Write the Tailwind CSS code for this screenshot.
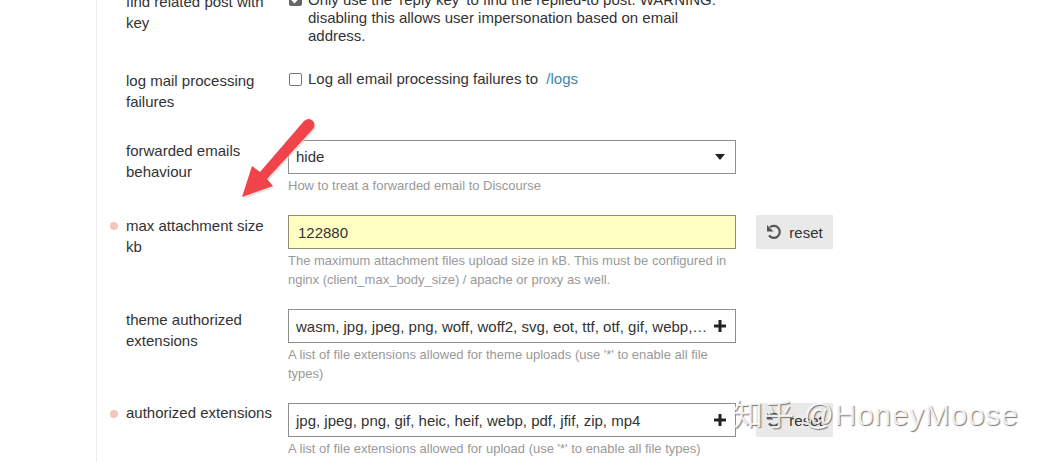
<!DOCTYPE html>
<html>
<head>
<meta charset="utf-8">
<script src="https://cdn.jsdelivr.net/npm/@tailwindcss/browser@4"></script>
</head>
<body class="bg-white overflow-hidden">
<div class="relative h-[462px] w-[1045px] overflow-hidden font-['Liberation_Sans',Arial,sans-serif] text-[#333]">
  <div class="ml-[96px] border-l border-[#ececec] h-[480px] -mt-[9px] pl-[29px] text-[15px] leading-[21px]">
    <div class="flex mb-[25px]">
      <div class="w-[162px] pr-[20px] shrink-0">find related post with key</div>
      <div class="w-[448px] flex gap-[6px] leading-[18px]">
        <span class="ml-[1px] mt-[2px] w-[13px] h-[13px] rounded-[2px] bg-[#666] shrink-0 flex items-center justify-center">
          <svg width="11" height="11" viewBox="0 0 11 11"><path d="M2 5.5 L4.5 8 L9 3" stroke="#fff" stroke-width="2" fill="none"/></svg>
        </span>
        <span class="max-w-[415px]">Only use the 'reply key' to find the replied-to post. WARNING: disabling this allows user impersonation based on email address.</span>
      </div>
    </div>
    <div class="flex mb-[28px]">
      <div class="w-[162px] pr-[20px] shrink-0">log mail processing failures</div>
      <div class="w-[448px] flex gap-[6px] leading-[18px]">
        <span class="ml-[1px] mt-[3px] w-[13px] h-[13px] rounded-[2px] border border-[#767676] bg-white shrink-0"></span>
        <span>Log all email processing failures to <a class="text-[#3d87a8] ml-[4px]">/logs</a></span>
      </div>
    </div>
    <div class="flex mb-[20px]">
      <div class="w-[162px] pr-[20px] shrink-0">forwarded emails behaviour</div>
      <div class="w-[448px]">
        <div class="h-[34px] border border-[#8f8f8f] flex items-center justify-between pl-[7px] pr-[10px]">
          <span class="-mt-[1px]">hide</span>
          <svg width="10" height="6" viewBox="0 0 10 6"><path d="M0 0 H10 L5 6 Z" fill="#222"/></svg>
        </div>
        <div class="mt-[2px] text-[13px] leading-[19px] text-[#999]">How to treat a forwarded email to Discourse</div>
      </div>
    </div>
    <div class="relative flex mb-[20px]">
      <span class="absolute -left-[16px] top-[7px] w-[8px] h-[8px] rounded-full bg-[#f2c6bc]"></span>
      <div class="w-[162px] pr-[20px] shrink-0">max attachment size kb</div>
      <div class="w-[448px]">
        <div class="h-[34px] border border-[#8f8f6f] bg-[#ffffc4] flex items-center pl-[9px]">122880</div>
        <div class="mt-[2px] text-[13px] leading-[19px] text-[#999]">The maximum attachment files upload size in kB. This must be configured in nginx (client_max_body_size) / apache or proxy as well.</div>
      </div>
      <div class="ml-[20px] w-[77px] h-[34px] bg-[#e9e9e9] flex items-center justify-center gap-[7px]">
        <svg width="16" height="16" viewBox="0 0 16 16"><path d="M4 3.2 A6 6 0 1 1 3 11.5" stroke="#555" stroke-width="2.2" fill="none"/><path d="M1 1 V7.5 H7.5 Z" fill="#555"/></svg>
        <span>reset</span>
      </div>
    </div>
    <div class="flex mb-[20px]">
      <div class="w-[162px] pr-[20px] shrink-0">theme authorized extensions</div>
      <div class="w-[448px]">
        <div class="h-[34px] border border-[#8f8f8f] flex items-center justify-between pl-[7px] pr-[8px]">
          <span class="truncate">wasm, jpg, jpeg, png, woff, woff2, svg, eot, ttf, otf, gif, webp,…</span>
          <svg class="shrink-0 ml-[5px]" width="14" height="14" viewBox="0 0 14 14"><path d="M7 1 V13 M1 7 H13" stroke="#222" stroke-width="3"/></svg>
        </div>
        <div class="mt-[2px] text-[13px] leading-[19px] text-[#999]">A list of file extensions allowed for theme uploads (use '*' to enable all file types)</div>
      </div>
    </div>
    <div class="relative flex">
      <span class="absolute -left-[16px] top-[7px] w-[8px] h-[8px] rounded-full bg-[#f2c6bc]"></span>
      <div class="w-[162px] shrink-0 -mt-[1px]">authorized extensions</div>
      <div class="w-[448px]">
        <div class="h-[34px] border border-[#8f8f8f] flex items-center justify-between pl-[7px] pr-[8px]">
          <span>jpg, jpeg, png, gif, heic, heif, webp, pdf, jfif, zip, mp4</span>
          <svg class="shrink-0" width="14" height="14" viewBox="0 0 14 14"><path d="M7 1 V13 M1 7 H13" stroke="#222" stroke-width="3"/></svg>
        </div>
        <div class="mt-[2px] text-[13px] leading-[19px] text-[#999]">A list of file extensions allowed for upload (use '*' to enable all file types)</div>
      </div>
      <div class="ml-[20px] w-[77px] h-[34px] bg-[#e9e9e9] flex items-center justify-center gap-[7px]">
        <svg width="16" height="16" viewBox="0 0 16 16"><path d="M4 3.2 A6 6 0 1 1 3 11.5" stroke="#555" stroke-width="2.2" fill="none"/><path d="M1 1 V7.5 H7.5 Z" fill="#555"/></svg>
        <span>reset</span>
      </div>
    </div>
  </div>
  <svg class="absolute left-0 top-0" width="1045" height="462" viewBox="0 0 1045 462">
    <path d="M242 197 L252 166 L260 172 L304 121 Q309 117 313 121 Q316 125 313 129 L267 179 L273 186 Z" fill="#d0d0d0" opacity="0.6" transform="translate(1 2)"/>
    <path d="M242 197 L252 166 L260 172 L304 121 Q309 117 313 121 Q316 125 313 129 L267 179 L273 186 Z" fill="#f0434a"/>
  </svg>
  <div class="absolute left-[733px] top-[397px] text-[30px] leading-[36px] tracking-[0.7px] whitespace-nowrap font-['Liberation_Sans','Noto_Sans_CJK_SC',sans-serif] text-white/85 [text-shadow:1px_1px_1px_rgba(90,90,90,0.8)]">知乎 @HoneyMoose</div>
</div>
</body>
</html>
